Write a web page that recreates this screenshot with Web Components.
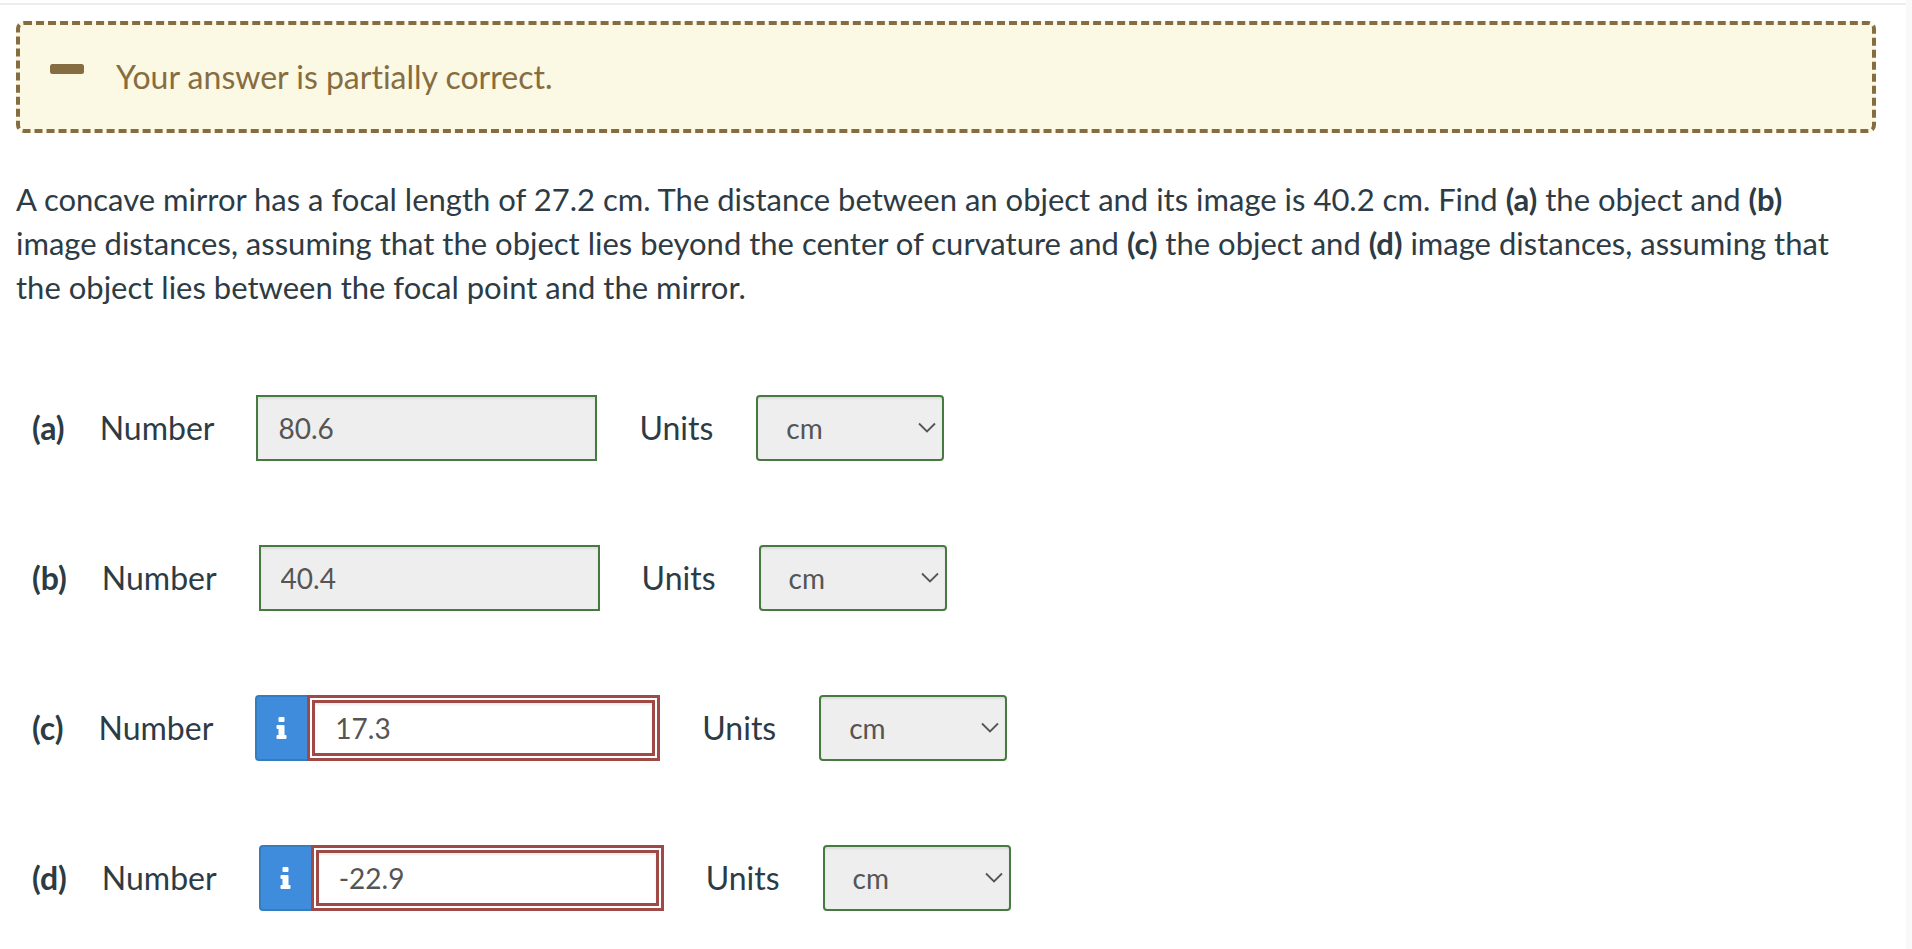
<!DOCTYPE html>
<html lang="en">
<head>
<meta charset="utf-8">
<title>Concave mirror</title>
<style>
  body { margin: 0; background: #fff; color: #2d3b45; font: 32px/44px Lato, sans-serif; font-variant-ligatures: none; }
</style>
</head>
<body>
<question-page>
  <answer-alert slot="alert">Your answer is partially correct.</answer-alert>
  <question-text>A concave mirror has a focal length of 27.2 cm. The distance between an object and its image is 40.2 cm. Find <b>(a)</b> the object and <b>(b)</b> image distances, assuming that the object lies beyond the center of curvature and <b>(c)</b> the object and <b>(d)</b> image distances, assuming that the object lies between the focal point and the mirror.</question-text>
  <answer-list slot="answers">
    <answer-row value="80.6" unit="cm" state="correct">(a)</answer-row>
    <answer-row value="40.4" unit="cm" state="correct">(b)</answer-row>
    <answer-row value="17.3" unit="cm" state="wrong">(c)</answer-row>
    <answer-row value="-22.9" unit="cm" state="wrong">(d)</answer-row>
  </answer-list>
</question-page>

<template id="question-page">
  <style>
    :host { display: flex; min-height: 100vh; }
    main { flex: 1; min-width: 0; }
    hr { margin: 3px 0 16px; border: 0; height: 2px; background: #ededed; }
    .content { padding: 0 30px 38px 16px; }
    aside { width: 6px; background: #f9f9f9; }
  </style>
  <main>
    <hr>
    <div class="content">
      <slot name="alert"></slot>
      <slot></slot>
      <slot name="answers"></slot>
    </div>
  </main>
  <aside></aside>
</template>

<template id="answer-alert">
  <style>
    :host { display: flex; gap: 32px; padding: 30px; border: 4px dashed #866d41; border-radius: 8px; background: #fbf8e4; color: #866d41; }
    svg { flex: none; width: 34px; height: 28px; }
  </style>
  <svg viewBox="0 0 34 28" aria-hidden="true"><rect y="9" width="34" height="10" rx="2.5" fill="#866d41"/></svg>
  <span role="status"><slot></slot></span>
</template>

<template id="question-text">
  <style>
    :host { display: block; padding: 44px 12px 86px 0; font-size: 31px; }
    p { margin: 0; }
  </style>
  <p><slot></slot></p>
</template>

<template id="answer-list">
  <style>
    :host { display: flex; flex-direction: column; gap: 84px; padding-left: 16px; }
  </style>
  <slot></slot>
</template>

<template id="answer-row">
  <style>
    :host { display: flex; align-items: center; }
    * { box-sizing: border-box; }
    b { margin-right: 35px; }
    .field { display: flex; margin: 0 42px; }
    input, select {
      height: 66px; margin: 0; border: 2px solid #467a40; border-radius: 0;
      background: #eee; color: #555; opacity: 1; font: 28px/34px Lato, sans-serif;
      box-shadow: inset 0 2px 2px rgba(0, 0, 0, .075); outline: 0;
    }
    input { width: 341px; padding: 0 20px; }
    :host([state="wrong"]) input { width: 353px; border: 8px double #9f4a47; background: #fff; }
    button {
      display: none; width: 52px; height: 66px; padding: 0;
      border: 2px solid #357ebd; border-right: 0; border-radius: 4px 0 0 4px; background: #3f8cdc;
    }
    :host([state="wrong"]) button { display: grid; place-items: center; }
    button svg { width: 12px; height: 22px; }
    .unit { display: grid; align-items: center; margin-left: 43px; }
    .unit > * { grid-area: 1 / 1; }
    select { width: 188px; padding: 0 28px; border-radius: 4px; appearance: none; }
    .unit svg { justify-self: end; width: 18px; height: 12px; margin-right: 8px; pointer-events: none; }
  </style>
  <b><slot></slot></b>
  <label for="number">Number</label>
  <div class="field">
    <button type="button" aria-label="Feedback">
      <svg viewBox="0 0 12 22" fill="#fff" aria-hidden="true"><path d="M3.500 0h4q1 0 1 1v3q0 1-1 1h-4q-1 0-1-1V1q0-1 1-1zM1.500 8h6q1 0 1 1v9h1q1 0 1 1v2q0 1-1 1h-8q-1 0-1-1v-2q0-1 1-1h1v-6h-1q-1 0-1-1V9q0-1 1-1z"/></svg>
    </button>
    <input id="number" type="text">
  </div>
  <label for="units">Units</label>
  <div class="unit">
    <select id="units" disabled><option></option></select>
    <svg viewBox="0 0 18 12" fill="none" stroke="#555" stroke-width="1.8" aria-hidden="true"><path d="M1 1.500l8 8 8-8"/></svg>
  </div>
</template>

<script>
  class TemplateElement extends HTMLElement {
    constructor() {
      super();
      const template = document.getElementById(this.localName);
      this.attachShadow({ mode: "open" }).append(template.content.cloneNode(true));
    }
  }

  class AnswerRow extends TemplateElement {
    connectedCallback() {
      const input = this.shadowRoot.querySelector("input");
      input.value = this.getAttribute("value");
      input.disabled = this.getAttribute("state") === "correct";
      this.shadowRoot.querySelector("option").textContent = this.getAttribute("unit");
    }
  }

  customElements.define("question-page", class extends TemplateElement {});
  customElements.define("answer-alert", class extends TemplateElement {});
  customElements.define("question-text", class extends TemplateElement {});
  customElements.define("answer-list", class extends TemplateElement {});
  customElements.define("answer-row", AnswerRow);
</script>
</body>
</html>
